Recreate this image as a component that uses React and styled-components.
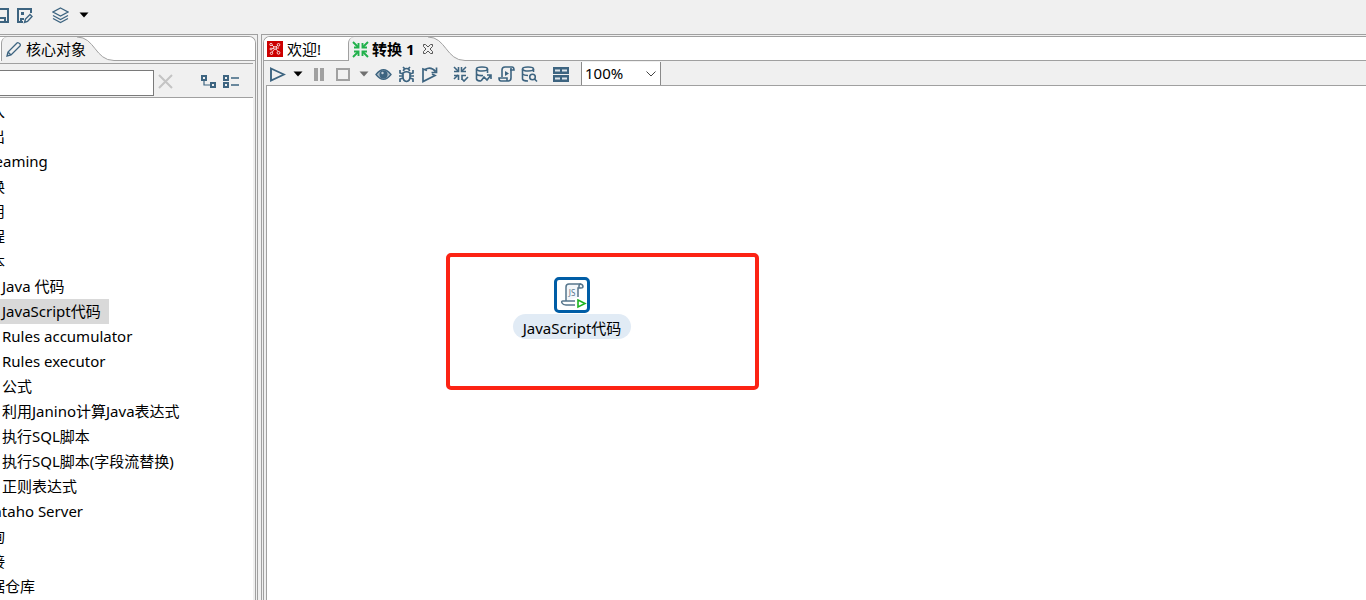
import React, { useState } from "react";
import styled, { createGlobalStyle, css } from "styled-components";

const GlobalStyle = createGlobalStyle`
  * {
    box-sizing: border-box;
  }

  body {
    margin: 0;
    overflow: hidden;
    background-color: #f0f0f0;
  }

  body, button, input, select {
    color: #000;
    font-family: "Noto Sans", "Noto Sans CJK SC", sans-serif;
    font-size: 15px;
  }
`;

const Window = styled.div`
  display: flex;
  flex-direction: column;
  height: 100vh;
  overflow: hidden;
`;

const MainToolbar = styled.header`
  display: flex;
  flex: none;
  align-items: center;
  height: 34px;
  padding-bottom: 4px;
  margin-left: -11px;
`;

const Workbench = styled.main`
  display: flex;
  flex: 1;
  gap: 3px;
  min-height: 0;
`;

const Pane = styled.section`
  display: flex;
  flex-direction: column;
  min-width: 0;
  padding-top: 1px;
  border-top: 1px solid #a0a0a0;
`;

const SidePane = styled(Pane)`
  flex: none;
  width: 258px;
  padding-right: 1px;
  border-right: 1px solid #a0a0a0;
`;

const EditorPane = styled(Pane)`
  flex: 1;
  padding-left: 1px;
  border-left: 1px solid #a0a0a0;
`;

const Folder = styled.div`
  display: flex;
  flex: 1;
  flex-direction: column;
  min-height: 0;
  border-top: 1px solid #a0a0a0;
  overflow: hidden;
  ${(props) =>
    props.$side === "left"
      ? css`
          border-right: 1px solid #a0a0a0;
          border-top-right-radius: 7px;
        `
      : css`
          border-left: 1px solid #a0a0a0;
          border-top-left-radius: 7px;
        `}
`;

const TabBar = styled.div`
  display: flex;
  flex: none;
  height: 24px;
  background-color: #fff;
`;

const TabFill = styled.div`
  flex: 1;
  border-bottom: 1px solid #a0a0a0;
`;

const Tab = styled.button`
  display: flex;
  align-items: center;
  gap: 4px;
  padding: 0 0 0 3px;
  border: 0;
  border-bottom: 1px solid #a0a0a0;
  background: #fff;
  line-height: 22px;
  white-space: nowrap;

  svg {
    flex: none;
  }

  ${(props) =>
    props.$active &&
    css`
      border-bottom: 0;
      border-left: 1px solid #a0a0a0;
      border-top-left-radius: 6px;
      background: #f0f0f0;
      font-weight: ${props.$bold ? 700 : 400};
    `}
`;

const WelcomeTab = styled(Tab)`
  width: 84px;
`;

const TransTab = styled(Tab)`
  width: 80px;
  gap: 3px;

  svg:last-child {
    margin-left: 5px;
  }
`;

const ObjectsTab = styled(Tab)`
  width: 76px;
  margin-left: 1px;
`;

const Curve = styled.svg`
  flex: none;
  width: 37px;
  height: 24px;
  pointer-events: none;
`;

/* keeps the tab label above the slanted edge that follows it */
const TabGroup = styled.div`
  display: flex;
  flex: none;
  isolation: isolate;

  button {
    z-index: 1;
  }
`;

const IconButton = styled.button`
  display: flex;
  flex: none;
  align-items: center;
  justify-content: center;
  width: ${(props) => props.$width || 23}px;
  height: 22px;
  margin-left: ${(props) => props.$gap || 0}px;
  padding: 0;
  border: 0;
  background: none;
  color: #3d6480;

  svg {
    flex: none;
  }
`;

const SearchBar = styled.div`
  display: flex;
  flex: none;
  align-items: center;
  height: 35px;
  margin: 2px 2px 0 0;
  padding-top: 2px;
  border-top: 1px solid #a0a0a0;
  border-bottom: 1px solid #a0a0a0;
`;

const SearchInput = styled.input`
  width: 154px;
  height: 26px;
  margin: 3px 0 0;
  padding: 0 4px;
  border: 1px solid #7a7a7a;
  border-left: 0;
  border-radius: 0;
  background: #fff;
  outline: none;
`;

const Tree = styled.ul`
  flex: 1;
  min-height: 0;
  margin: 0 2px 0 0;
  padding: 1px 0 0;
  background-color: #fff;
  list-style: none;
  overflow: hidden;
`;

const TreeRow = styled.li`
  height: 25px;
  margin-left: ${(props) => (props.$level === 1 ? 0 : -25)}px;
  line-height: 25px;
  white-space: nowrap;
`;

const TreeLabel = styled.span`
  display: inline-block;
  height: 25px;
  padding: 0 8px 0 ${(props) => (props.$level === 1 ? 2 : 0)}px;
  background-color: ${(props) => (props.$selected ? "#d9d9d9" : "transparent")};
`;

const EditorToolbar = styled.div`
  display: flex;
  flex: none;
  align-items: center;
  height: 24px;
  padding-left: 2px;

  button {
    padding-top: 2px;
  }
`;

const ZoomBox = styled.div`
  display: grid;
  align-items: center;
  width: 80px;
  height: 23px;
  margin: 1px 0 0 9px;
  border-left: 1px solid #8a8a8a;
  border-right: 1px solid #8a8a8a;
  background-color: #fff;

  > * {
    grid-area: 1 / 1;
  }

  svg {
    justify-self: end;
    margin-right: 4px;
    pointer-events: none;
  }
`;

const ZoomSelect = styled.select`
  width: 100%;
  height: 22px;
  padding: 0 0 2px 3px;
  border: 0;
  background: transparent;
  appearance: none;
  outline: none;
`;

const Canvas = styled.div`
  position: relative;
  flex: 1;
  margin-left: 2px;
  border-top: 1px solid #a0a0a0;
  border-left: 1px solid #a0a0a0;
  background-color: #fff;
  overflow: hidden;
`;

const Highlight = styled.div`
  position: absolute;
  top: 167px;
  left: 179px;
  width: 313px;
  height: 137px;
  border: 4px solid #fc2314;
  border-radius: 5px;
`;

const Step = styled.div`
  position: absolute;
  top: 191px;
  left: 246px;
  display: flex;
  flex-direction: column;
  align-items: center;
  gap: 1px;
  width: 118px;
`;

const StepIcon = styled.div`
  width: 36px;
  height: 36px;
  border: 3px solid #005da6;
  border-radius: 5px;
  background-color: #fff;

  svg {
    display: block;
  }
`;

const StepName = styled.div`
  width: 118px;
  height: 25px;
  border-radius: 13px;
  background-color: #e1ebf5;
  line-height: 28px;
  text-align: center;
  white-space: nowrap;
`;

const Icon = ({ children, size = 17, ...rest }) => (
  <svg
    width={size}
    height={size}
    viewBox={`0 0 ${size} ${size}`}
    fill="none"
    stroke="currentColor"
    strokeWidth="1.6"
    aria-hidden="true"
    {...rest}
  >
    {children}
  </svg>
);

const SaveIcon = () => (
  <Icon strokeWidth="2">
    <path d="M2 2H16V15H2Z" />
    <path d="M6 15V11H13V15" />
  </Icon>
);

const SaveAsIcon = () => (
  <Icon>
    <path d="M7 15H2V2H15V6" strokeWidth="2" />
    <path d="M5 5H8V8H5Z" fill="currentColor" stroke="none" />
    <path d="M5 15V12H8" strokeWidth="2" />
    <path d="M8.500 15.500L9.500 12L14 7.500L16 9.500L11.500 14.500Z" strokeWidth="1.4" />
  </Icon>
);

const LayersIcon = () => (
  <Icon strokeWidth="1.3">
    <path d="M8.500 1L16 5L8.500 9L1 5Z" />
    <path d="M1 8.500L8.500 12.500L16 8.500M1 11.500L8.500 15.500L16 11.500" />
  </Icon>
);

const CaretIcon = ({ color = "#000" }) => (
  <svg width="10" height="6" viewBox="0 0 10 6" aria-hidden="true">
    <path d="M0.500 0.500H9.500L5 5.500Z" fill={color} />
  </svg>
);

const PencilIcon = () => (
  <Icon stroke="#3d6480" strokeWidth="1.3">
    <path d="M2 15L3 11L12 2Q13 1 15 3Q16 4 15 5L6 14ZM3 11L6 14" />
  </Icon>
);

const ClearIcon = () => (
  <Icon stroke="#c4c4c4" strokeWidth="2">
    <path d="M2 2L15 15M15 2L2 15" />
  </Icon>
);

const ExpandIcon = () => (
  <Icon>
    <path d="M2 3H6V7H2ZM11 10H15V14H11Z" strokeWidth="2" />
    <path d="M4 8V12H10" strokeWidth="1.2" />
  </Icon>
);

const CollapseIcon = () => (
  <Icon>
    <path d="M1 3H5V7H1ZM1 10H5V14H1Z" strokeWidth="2" />
    <path d="M8 5H16M8 12H16" strokeWidth="1.3" />
  </Icon>
);

const WelcomeIcon = () => (
  <Icon size={16} stroke="#fff" strokeWidth="0.8">
    <path d="M0 0H16V16H0Z" fill="#cc0000" stroke="none" />
    <path d="M5 4L7 6M9 6L10.500 4.500M5 7.500L7 7M9 8L11 10.500M7 8.500L5 11.500M9 7H12" />
    <circle cx="4" cy="3.500" r="1.200" />
    <circle cx="11.500" cy="3.800" r="1.300" />
    <circle cx="4" cy="8" r="1" />
    <circle cx="4.500" cy="12.300" r="1.200" />
    <circle cx="11.500" cy="11.800" r="1.400" />
    <circle cx="8" cy="7" r="1.400" />
  </Icon>
);

const TransIcon = ({ color = "currentColor" }) => (
  <Icon stroke={color} strokeWidth="1.9">
    <path d="M1 1L6 6M16 1L11 6M1 16L6 11M16 16L11 11" />
    <path d="M2 6.500H6.500V2M15 6.500H10.500V2M2 10.500H6.500V15M15 10.500H10.500V15" />
  </Icon>
);

const CloseIcon = () => (
  <Icon size={12} stroke="#555" strokeWidth="1">
    <path d="M1.500 1.500H3.500L6 4L8.500 1.500H10.500V3.500L8 6L10.500 8.500V10.500H8.500L6 8L3.500 10.500H1.500V8.500L4 6L1.500 3.500Z" />
  </Icon>
);

const RunIcon = () => (
  <Icon strokeWidth="1.9">
    <path d="M2 2.500L15 8.500L2 14.500Z" />
  </Icon>
);

const PauseIcon = () => (
  <Icon fill="#a0a0a0" stroke="none">
    <path d="M3 2H7V15H3ZM9 2H13V15H9Z" />
  </Icon>
);

const StopIcon = () => (
  <Icon stroke="#a0a0a0" strokeWidth="2">
    <path d="M2 3H14V14H2Z" />
  </Icon>
);

const EyeIcon = () => (
  <Icon>
    <path d="M1 8.500Q8.500 -1 16 8.500Q8.500 18 1 8.500Z" fill="#a9bac6" strokeWidth="1.3" />
    <circle cx="8.500" cy="8.500" r="4" fill="currentColor" stroke="none" />
    <circle cx="7.500" cy="7" r="1.200" fill="#c5d0d8" stroke="none" />
  </Icon>
);

const BugIcon = () => (
  <Icon strokeWidth="1.7">
    <path d="M5 7Q8.500 4.500 12 7V11Q12 15 8.500 15.500Q5 15 5 11Z" />
    <path d="M5.500 5Q5.500 2.500 8.500 2.500Q11.500 2.500 11.500 5M5 1L7 3M12 1L10 3" />
    <path d="M5 8L2 7V4M12 8L15 7V4M5 10H1M12 10H16M5 12L2 13V16M12 12L15 13V16" />
  </Icon>
);

const ReplayIcon = () => (
  <Icon strokeWidth="1.7">
    <path d="M6 4.500L2 3V15.500L14 9.500L11 8" />
    <path d="M4 3.500Q10 0 14.500 5.500M15.500 1.500V6.500H10.500" />
  </Icon>
);

const VerifyIcon = () => (
  <Icon strokeWidth="1.6">
    <path d="M2 1L6 5M14 1L10 5M2 13L6 9" />
    <path d="M2 5.500H6.500V1M14 5.500H9.500V1M2 9.500H6.500V14M10 14V9.500H14" />
    <path d="M10 13L12 15L16 11" />
  </Icon>
);

const ImpactIcon = () => (
  <Icon strokeWidth="1.6">
    <ellipse cx="7" cy="3" rx="5.500" ry="2" />
    <path d="M1.500 3V13Q2 15 6 15M12.500 3V7M1.500 8Q3 10 8 9.500" />
    <path d="M6 15L9 11L12 14L16 9M12 9H16V13" />
  </Icon>
);

const SqlIcon = () => (
  <Icon strokeWidth="1.6">
    <path d="M4 11V4Q4 1 7 1H14Q16 1 16 4H12M13 2V12Q13 15 10 15H3Q1 15 1 12H9V15" />
    <path d="M7 5L11 7.500L7 10Z" fill="currentColor" stroke="none" />
  </Icon>
);

const ExploreIcon = () => (
  <Icon strokeWidth="1.6">
    <ellipse cx="7" cy="3" rx="5.500" ry="2" />
    <path d="M1.500 3V13Q2 15 7 15M12.500 3V6M1.500 8Q3 9.500 7 9.500" />
    <circle cx="11.500" cy="11" r="2.800" />
    <path d="M13.500 13L16 15.500" />
  </Icon>
);

const ResultsIcon = () => (
  <Icon>
    <path d="M1 1H17V8H1ZM1 9H17V16H1Z" fill="currentColor" stroke="none" />
    <path d="M3 3.500H8V5.500H3ZM10 3.500H15V5.500H10ZM3 11.500H8V13.500H3ZM10 11.500H15V13.500H10Z" fill="#dfe6eb" stroke="none" />
  </Icon>
);

const ScriptIcon = () => (
  <Icon size={30} stroke="#56758c" strokeWidth="1.5">
    <path
      d="M9 21V7Q9 4 12 4H23Q26 4 26 7Q26 8 24 8H21V17"
      fill="#f3f7fa"
    />
    <path d="M22 8V6Q22 4 24 4M18 21H6Q4 21 5 23Q6 25 9 25H18" />
    <text
      x="15"
      y="16"
      fill="#56758c"
      stroke="none"
      textAnchor="middle"
      fontSize="8"
    >
      JS
    </text>
    <path d="M21 20L28 23.500L21 27Z" stroke="#1fb521" strokeWidth="1.6" fill="#fff" />
  </Icon>
);

const TabCurve = () => (
  <Curve viewBox="0 0 37 24" aria-hidden="true">
    <path d="M0 0C18 0 18 23.500 37 23.500V24H0Z" fill="#f0f0f0" />
    <path
      d="M0 0C18 0 18 23.500 37 23.500"
      fill="none"
      stroke="#a0a0a0"
      strokeWidth="1"
    />
  </Curve>
);

const steps = [
  { name: "输入" },
  { name: "输出" },
  { name: "Streaming" },
  { name: "转换" },
  { name: "应用" },
  { name: "流程" },
  { name: "脚本" },
  { name: "Java 代码", level: 1 },
  { name: "JavaScript代码", level: 1 },
  { name: "Rules accumulator", level: 1 },
  { name: "Rules executor", level: 1 },
  { name: "公式", level: 1 },
  { name: "利用Janino计算Java表达式", level: 1 },
  { name: "执行SQL脚本", level: 1 },
  { name: "执行SQL脚本(字段流替换)", level: 1 },
  { name: "正则表达式", level: 1 },
  { name: "Pentaho Server" },
  { name: "查询" },
  { name: "连接" },
  { name: "数据仓库" },
];

function Sidebar() {
  const [selected, setSelected] = useState("JavaScript代码");

  return (
    <SidePane>
      <Folder $side="left">
        <TabBar>
          <TabGroup>
            <ObjectsTab $active>
              <PencilIcon />
              核心对象
            </ObjectsTab>
            <TabCurve />
          </TabGroup>
          <TabFill />
        </TabBar>
        <SearchBar>
          <SearchInput type="text" aria-label="搜索" />
          <IconButton aria-label="清除">
            <ClearIcon />
          </IconButton>
          <IconButton $gap={20} aria-label="展开">
            <ExpandIcon />
          </IconButton>
          <IconButton aria-label="折叠">
            <CollapseIcon />
          </IconButton>
        </SearchBar>
        <Tree>
          {steps.map(({ name, level }) => (
            <TreeRow key={name} $level={level} onClick={() => setSelected(name)}>
              <TreeLabel $level={level} $selected={name === selected}>
                {name}
              </TreeLabel>
            </TreeRow>
          ))}
        </Tree>
      </Folder>
    </SidePane>
  );
}

function Editor() {
  return (
    <EditorPane>
      <Folder $side="right">
        <TabBar>
          <WelcomeTab>
            <WelcomeIcon />
            欢迎!
          </WelcomeTab>
          <TabGroup>
            <TransTab $active $bold>
              <TransIcon color="#22b14c" />
              转换 1
              <CloseIcon />
            </TransTab>
            <TabCurve />
          </TabGroup>
          <TabFill />
        </TabBar>
        <EditorToolbar>
          <IconButton aria-label="运行">
            <RunIcon />
          </IconButton>
          <IconButton $width={18} aria-label="运行选项">
            <CaretIcon />
          </IconButton>
          <IconButton $width={24} aria-label="暂停">
            <PauseIcon />
          </IconButton>
          <IconButton $width={24} aria-label="停止">
            <StopIcon />
          </IconButton>
          <IconButton $width={17} aria-label="停止选项">
            <CaretIcon color="#707070" />
          </IconButton>
          <IconButton aria-label="预览">
            <EyeIcon />
          </IconButton>
          <IconButton aria-label="调试">
            <BugIcon />
          </IconButton>
          <IconButton aria-label="重放">
            <ReplayIcon />
          </IconButton>
          <IconButton $gap={8} aria-label="校验">
            <VerifyIcon />
          </IconButton>
          <IconButton aria-label="影响分析">
            <ImpactIcon />
          </IconButton>
          <IconButton aria-label="SQL">
            <SqlIcon />
          </IconButton>
          <IconButton aria-label="数据库浏览">
            <ExploreIcon />
          </IconButton>
          <IconButton $gap={8} aria-label="执行结果">
            <ResultsIcon />
          </IconButton>
          <ZoomBox>
            <ZoomSelect aria-label="缩放" defaultValue="100%">
              <option>200%</option>
              <option>150%</option>
              <option>100%</option>
              <option>75%</option>
              <option>50%</option>
            </ZoomSelect>
            <svg width="10" height="6" viewBox="0 0 10 6" aria-hidden="true">
              <path d="M0.500 0.500L5 5L9.500 0.500" fill="none" stroke="#444" />
            </svg>
          </ZoomBox>
        </EditorToolbar>
        <Canvas>
          <Highlight />
          <Step>
            <StepIcon>
              <ScriptIcon />
            </StepIcon>
            <StepName>JavaScript代码</StepName>
          </Step>
        </Canvas>
      </Folder>
    </EditorPane>
  );
}

function App() {
  return (
    <Window>
      <GlobalStyle />
      <MainToolbar>
        <IconButton aria-label="保存">
          <SaveIcon />
        </IconButton>
        <IconButton $gap={1} aria-label="另存为">
          <SaveAsIcon />
        </IconButton>
        <IconButton $gap={13} aria-label="视图">
          <LayersIcon />
        </IconButton>
        <IconButton $gap={3} $width={18} aria-label="视图选项">
          <CaretIcon />
        </IconButton>
      </MainToolbar>
      <Workbench>
        <Sidebar />
        <Editor />
      </Workbench>
    </Window>
  );
}

export default App;
